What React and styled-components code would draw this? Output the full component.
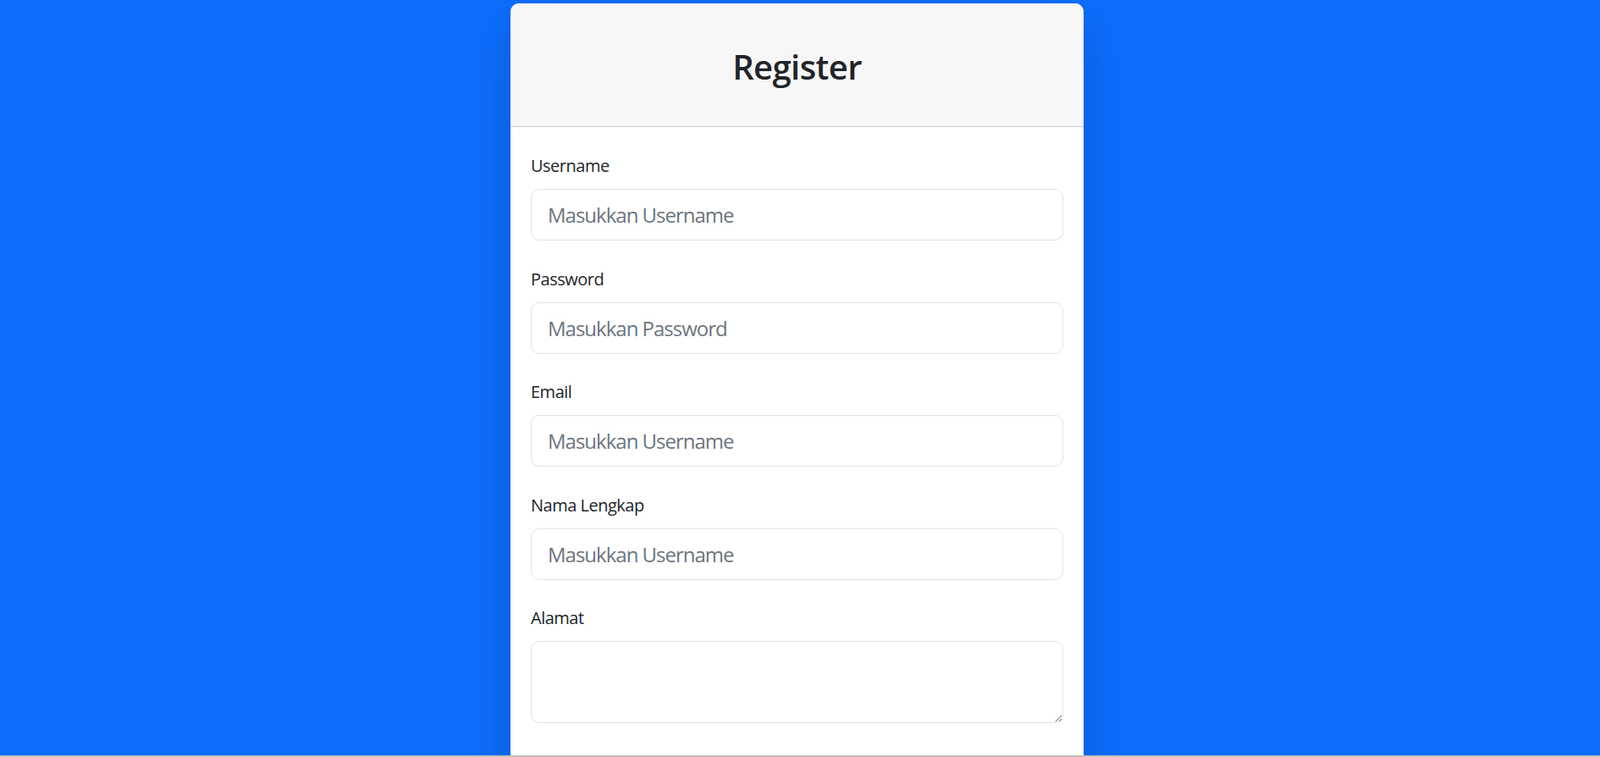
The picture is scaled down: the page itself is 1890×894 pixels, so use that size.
import React from "react";
import styled, { createGlobalStyle } from "styled-components";

const GlobalStyle = createGlobalStyle`
  * {
    box-sizing: border-box;
  }
  html, body {
    margin: 0;
    padding: 0;
    overflow: hidden;
  }
  body {
    font-family: "Segoe UI", "Open Sans", "Liberation Sans", sans-serif;
    color: #212529;
    background-color: #0d6efd;
  }
`;

const Page = styled.div`
  min-height: 100vh;
  display: flex;
  justify-content: center;
  align-items: flex-start;
  padding: 4px 7px 0 0;
  background-color: #0d6efd;
`;

const Card = styled.div`
  width: 677px;
  background-color: #fff;
  border-radius: 10px;
  box-shadow: 0 20px 60px rgba(0, 0, 0, 0.175);
  overflow: hidden;
`;

const CardHeader = styled.div`
  background-color: #f7f7f7;
  border-bottom: 1px solid rgba(0, 0, 0, 0.175);
  padding: 51px 20px 46px;
  text-align: center;
`;

const Title = styled.h2`
  margin: 0;
  font-size: 40px;
  line-height: 48px;
  font-weight: 600;
  letter-spacing: -0.6px;
  color: #212529;
`;

const CardBody = styled.form`
  padding: 30px 24px 24px;
`;

const Field = styled.div`
  margin-bottom: 29.5px;
`;

const Label = styled.label`
  display: block;
  font-size: 20px;
  line-height: 32px;
  letter-spacing: -0.5px;
  margin-bottom: 11px;
  color: #212529;
`;

const controlBase = `
  display: block;
  width: 100%;
  font-family: inherit;
  font-size: 24px;
  letter-spacing: -1px;
  color: #212529;
  background-color: #fff;
  border: 1px solid #dee2e6;
  border-radius: 10px;
  outline: none;
`;

const Input = styled.input`
  ${controlBase}
  height: 61px;
  padding: 0 19px;
  &::placeholder {
    color: #6c757d;
  }
`;

const TextArea = styled.textarea`
  ${controlBase}
  height: 97px;
  padding: 10px 19px;
  resize: vertical;
`;

const Select = styled.select`
  ${controlBase}
  height: 61px;
  padding: 0 19px;
`;

const SubmitButton = styled.button`
  width: 100%;
  height: 61px;
  font-family: inherit;
  font-size: 24px;
  color: #fff;
  background-color: #0d6efd;
  border: 1px solid #0d6efd;
  border-radius: 10px;
`;

const BottomEdge = styled.div`
  position: fixed;
  left: 0;
  right: 0;
  bottom: 0;
  height: 2px;
  background-color: #c4bdb9;
`;

const FIELDS = [
  { label: "Username", placeholder: "Masukkan Username", type: "text" },
  { label: "Password", placeholder: "Masukkan Password", type: "password" },
  { label: "Email", placeholder: "Masukkan Username", type: "email" },
  { label: "Nama Lengkap", placeholder: "Masukkan Username", type: "text" },
];

export default function App() {
  return (
    <>
      <GlobalStyle />
      <Page>
        <Card>
          <CardHeader>
            <Title>Register</Title>
          </CardHeader>
          <CardBody onSubmit={(e) => e.preventDefault()}>
            {FIELDS.map((f) => (
              <Field key={f.label}>
                <Label>{f.label}</Label>
                <Input type={f.type} placeholder={f.placeholder} />
              </Field>
            ))}
            <Field>
              <Label>Alamat</Label>
              <TextArea />
            </Field>
            <Field>
              <Label>Level</Label>
              <Select defaultValue="">
                <option value="">Pilih Level</option>
                <option value="admin">Admin</option>
                <option value="petugas">Petugas</option>
              </Select>
            </Field>
            <SubmitButton type="submit">Register</SubmitButton>
          </CardBody>
        </Card>
      </Page>
      <BottomEdge />
    </>
  );
}
